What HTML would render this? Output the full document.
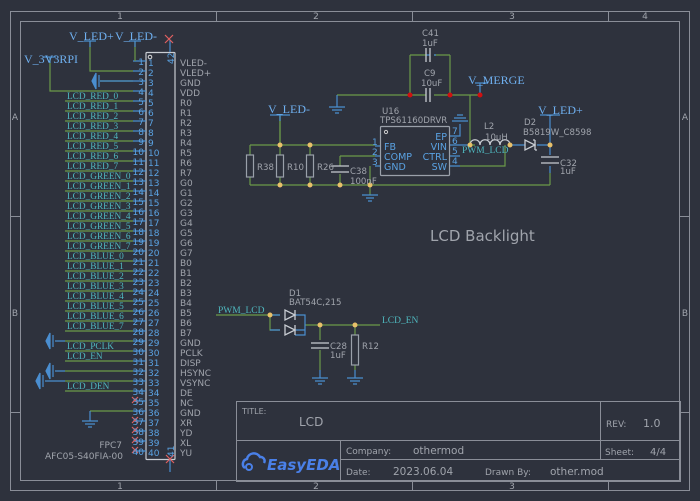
<!DOCTYPE html>
<html><head><meta charset="utf-8"><style>
html,body{margin:0;padding:0;background:#2e323d;}
svg{display:block}
.g{fill:#a0a4ac;font-family:"DejaVu Sans","Liberation Sans",sans-serif}
.b{fill:#5aa2e2;font-family:"DejaVu Sans","Liberation Sans",sans-serif}
.n{fill:#4fb8bf;font-family:"Liberation Serif",serif}
.p{fill:#6fb0f0;font-family:"Liberation Serif",serif}
</style></head><body>
<svg width="700" height="501" viewBox="0 0 700 501" xmlns="http://www.w3.org/2000/svg">
<rect width="700" height="501" fill="#2e323d"/>
<g stroke="#8a8e98" fill="none" stroke-width="1">
<rect x="10.5" y="11.5" width="679" height="479"/>
<rect x="20.5" y="21.5" width="659" height="459"/>
<path d="M216.5 11v10M412.5 11v10M608.5 11v10M216.5 481v10M412.5 481v10M608.5 481v10M10 216.5h10M10 412.5h10M680 216.5h10M680 412.5h10"/>
<rect x="236.5" y="401.5" width="444" height="80"/>
<path d="M236 440.5h444M340 459.5h340M340.5 440v41M600.5 401v58"/>
</g>
<g class="g" font-size="9" text-anchor="middle">
<text x="120" y="19">1</text><text x="316" y="19">2</text><text x="512" y="19">3</text><text x="645" y="19">4</text>
<text x="120" y="489">1</text><text x="316" y="489">2</text><text x="512" y="489">3</text>
<text x="15" y="120">A</text><text x="15" y="316">B</text><text x="685" y="120">A</text><text x="685" y="316">B</text>
</g>
<g class="g">
<text x="242" y="414" font-size="8">TITLE:</text>
<text x="299" y="426" font-size="12">LCD</text>
<text x="606" y="427" font-size="9">REV:</text><text x="643" y="427" font-size="11">1.0</text>
<text x="346" y="454" font-size="9">Company:</text><text x="413" y="454" font-size="10.5">othermod</text>
<text x="605" y="455" font-size="9">Sheet:</text><text x="650" y="455" font-size="10">4/4</text>
<text x="346" y="475" font-size="9">Date:</text><text x="393" y="475" font-size="10.5">2023.06.04</text>
<text x="485" y="475" font-size="9">Drawn By:</text><text x="550" y="475" font-size="10.5">other.mod</text>
<text x="430" y="241" font-size="15">LCD Backlight</text>
</g>
<g>
<path d="M245 468a5 5 0 0 1 2-9a7 7 0 0 1 13-2a4 4 0 0 1 4 6" stroke="#4a80e8" stroke-width="2.5" fill="none"/>
<circle cx="249" cy="467" r="3" stroke="#4a80e8" stroke-width="2" fill="none"/>
<text x="267" y="470" font-family="DejaVu Sans,sans-serif" font-style="italic" font-weight="bold" font-size="15" fill="#4a80e8">EasyEDA</text>
</g>

<!-- connector -->
<rect x="146" y="52.5" width="29" height="407" fill="none" stroke="#c8ccd2" stroke-width="1.2" rx="1"/>
<circle cx="150" cy="57" r="1.8" fill="none" stroke="#ddd"/>
<g id="pins" stroke="#4a8ed0" stroke-width="1.2">
<path d="M133 61h13M133 71h13M133 81h13M133 91h13M133 101h13M133 111h13M133 121h13M133 131h13M133 141h13M133 151h13M133 161h13M133 171h13M133 181h13M133 191h13M133 201h13M133 211h13M133 221h13M133 231h13M133 241h13M133 251h13M133 261h13M133 271h13M133 281h13M133 291h13M133 301h13M133 311h13M133 321h13M133 331h13M133 341h13M133 351h13M133 361h13M133 371h13M133 381h13M133 391h13M133 401h13M133 411h13M133 421h13M133 431h13M133 441h13M133 451h13"/>
<path d="M170 40v12M170 460v12"/>
</g>
<g stroke="#6b9a49" stroke-width="1.2" fill="none">
<path d="M65 101h68M65 111h68M65 121h68M65 131h68M65 141h68M65 151h68M65 161h68M65 171h68M65 181h68M65 191h68M65 201h68M65 211h68M65 221h68M65 231h68M65 241h68M65 251h68M65 261h68M65 271h68M65 281h68M65 291h68M65 301h68M65 311h68M65 321h68M65 331h68"/>
<path d="M65 341h68M65 351h68M65 361h68M65 371h68M65 381h68M65 391h68M90 411h43"/>
<path d="M90 41v30h43M135 41v20M50 57v34h83M100 81h33"/>
</g>
<g stroke="#4a8ed0" stroke-width="1.2" fill="#4a8ed0">
<path d="M55 341h10M55 371h10M45 381h20M100 81h33" fill="none"/>
<path d="M50 333l-4 8 4 8zM50 363l-4 8 4 8zM40 373l-4 8 4 8zM96 73l-4 8 4 8z"/>
<path d="M53 335v12M53 365v12M43 375v12M99 75v12" fill="none"/>
<path d="M90 411v10M82 421h16M85 424h10M88 427h4" fill="none"/>
<path d="M84 41h12M129 41h12M44 57h12M90 41v6M135 41v6M50 57v6" fill="none"/>
</g>
<g stroke="#e06060" stroke-width="1.2">
<path d="M165 35l8 8M173 35l-8 8M166 455l8 8M174 455l-8 8"/>
<path d="M132 397l6 6M138 397l-6 6M132 417l6 6M138 417l-6 6M132 427l6 6M138 427l-6 6M132 437l6 6M138 437l-6 6M132 447l6 6M138 447l-6 6"/>
</g>
<g class="p" font-size="12">
<text x="69" y="40">V_LED+</text><text x="115" y="40">V_LED-</text><text x="24" y="63">V_3V3RPI</text>
</g>
<g class="n" font-size="9.3">
<text x="67" y="99">LCD_RED_0</text><text x="67" y="109">LCD_RED_1</text><text x="67" y="119">LCD_RED_2</text><text x="67" y="129">LCD_RED_3</text><text x="67" y="139">LCD_RED_4</text><text x="67" y="149">LCD_RED_5</text><text x="67" y="159">LCD_RED_6</text><text x="67" y="169">LCD_RED_7</text>
<text x="67" y="179">LCD_GREEN_0</text><text x="67" y="189">LCD_GREEN_1</text><text x="67" y="199">LCD_GREEN_2</text><text x="67" y="209">LCD_GREEN_3</text><text x="67" y="219">LCD_GREEN_4</text><text x="67" y="229">LCD_GREEN_5</text><text x="67" y="239">LCD_GREEN_6</text><text x="67" y="249">LCD_GREEN_7</text>
<text x="67" y="259">LCD_BLUE_0</text><text x="67" y="269">LCD_BLUE_1</text><text x="67" y="279">LCD_BLUE_2</text><text x="67" y="289">LCD_BLUE_3</text><text x="67" y="299">LCD_BLUE_4</text><text x="67" y="309">LCD_BLUE_5</text><text x="67" y="319">LCD_BLUE_6</text><text x="67" y="329">LCD_BLUE_7</text>
<text x="67" y="349">LCD_PCLK</text><text x="67" y="359">LCD_EN</text><text x="67" y="389">LCD_DEN</text>
</g>
<g class="b" font-size="9" text-anchor="end">
<text x="144" y="65">1</text><text x="144" y="75">2</text><text x="144" y="85">3</text><text x="144" y="95">4</text><text x="144" y="105">5</text><text x="144" y="115">6</text><text x="144" y="125">7</text><text x="144" y="135">8</text><text x="144" y="145">9</text><text x="144" y="155">10</text><text x="144" y="165">11</text><text x="144" y="175">12</text><text x="144" y="185">13</text><text x="144" y="195">14</text><text x="144" y="205">15</text><text x="144" y="215">16</text><text x="144" y="225">17</text><text x="144" y="235">18</text><text x="144" y="245">19</text><text x="144" y="255">20</text><text x="144" y="265">21</text><text x="144" y="275">22</text><text x="144" y="285">23</text><text x="144" y="295">24</text><text x="144" y="305">25</text><text x="144" y="315">26</text><text x="144" y="325">27</text><text x="144" y="335">28</text><text x="144" y="345">29</text><text x="144" y="355">30</text><text x="144" y="365">31</text><text x="144" y="375">32</text><text x="144" y="385">33</text><text x="144" y="395">34</text><text x="144" y="405">35</text><text x="144" y="415">36</text><text x="144" y="425">37</text><text x="144" y="435">38</text><text x="144" y="445">39</text><text x="144" y="455">40</text>
</g>
<g class="b" font-size="9">
<text x="148" y="66">1</text><text x="148" y="76">2</text><text x="148" y="86">3</text><text x="148" y="96">4</text><text x="148" y="106">5</text><text x="148" y="116">6</text><text x="148" y="126">7</text><text x="148" y="136">8</text><text x="148" y="146">9</text><text x="148" y="156">10</text><text x="148" y="166">11</text><text x="148" y="176">12</text><text x="148" y="186">13</text><text x="148" y="196">14</text><text x="148" y="206">15</text><text x="148" y="216">16</text><text x="148" y="226">17</text><text x="148" y="236">18</text><text x="148" y="246">19</text><text x="148" y="256">20</text><text x="148" y="266">21</text><text x="148" y="276">22</text><text x="148" y="286">23</text><text x="148" y="296">24</text><text x="148" y="306">25</text><text x="148" y="316">26</text><text x="148" y="326">27</text><text x="148" y="336">28</text><text x="148" y="346">29</text><text x="148" y="356">30</text><text x="148" y="366">31</text><text x="148" y="376">32</text><text x="148" y="386">33</text><text x="148" y="396">34</text><text x="148" y="406">35</text><text x="148" y="416">36</text><text x="148" y="426">37</text><text x="148" y="436">38</text><text x="148" y="446">39</text><text x="148" y="456">40</text>
<text x="0" y="0" transform="translate(174 64) rotate(-90)">42</text>
<text x="0" y="0" transform="translate(174 457) rotate(-90)">41</text>
</g>
<g class="g" font-size="9">
<text x="180" y="66">VLED-</text><text x="180" y="76">VLED+</text><text x="180" y="86">GND</text><text x="180" y="96">VDD</text><text x="180" y="106">R0</text><text x="180" y="116">R1</text><text x="180" y="126">R2</text><text x="180" y="136">R3</text><text x="180" y="146">R4</text><text x="180" y="156">R5</text><text x="180" y="166">R6</text><text x="180" y="176">R7</text><text x="180" y="186">G0</text><text x="180" y="196">G1</text><text x="180" y="206">G2</text><text x="180" y="216">G3</text><text x="180" y="226">G4</text><text x="180" y="236">G5</text><text x="180" y="246">G6</text><text x="180" y="256">G7</text><text x="180" y="266">B0</text><text x="180" y="276">B1</text><text x="180" y="286">B2</text><text x="180" y="296">B3</text><text x="180" y="306">B4</text><text x="180" y="316">B5</text><text x="180" y="326">B6</text><text x="180" y="336">B7</text><text x="180" y="346">GND</text><text x="180" y="356">PCLK</text><text x="180" y="366">DISP</text><text x="180" y="376">HSYNC</text><text x="180" y="386">VSYNC</text><text x="180" y="396">DE</text><text x="180" y="406">NC</text><text x="180" y="416">GND</text><text x="180" y="426">XR</text><text x="180" y="436">YD</text><text x="180" y="446">XL</text><text x="180" y="456">YU</text>
<text x="122" y="448" text-anchor="end">FPC7</text><text x="123" y="459" text-anchor="end">AFC05-S40FIA-00</text>
</g>

<!-- backlight circuit -->
<g stroke="#6b9a49" stroke-width="1.2" fill="none">
<path d="M410 55v40M450 55v40M410 55h16M434 55h16M337 95h89M434 95h46M470 95v50h5"/>
<path d="M250 145h125M280 115v30M250 145v10M280 145v10M310 145v10M250 177v8M280 177v8M310 177v8M250 185h300M340 156h35M340 156v10M340 174v11M370 166v29M550 173v12"/>
<path d="M505 145v21H460M280 115v30"/>
<path d="M216 315h54v15h10M270 315h10M305 325h75M320 325v15M320 350v20M355 325v10M355 365v5"/>
</g>
<g stroke="#4a8ed0" stroke-width="1.2" fill="none">
<path d="M426 55h4M434 55h2M337 95v12M329 107h16M332 110h10M335 113h4"/>
<path d="M270 115h20M280 115v6M475 83h12M480 83v12M540 115h20M550 115v30M550 145v10M550 166v7M510 145h15M537 145h13"/>
<path d="M370 195h-8m8 0h8M363 195h14M366 198h8M368 201h4"/>
<path d="M450 136h10v-12M452 121h16M454 118h12M457 115h6M450 145h20M450 156h10M450 166h10M375 146h5M375 156h5M375 166h5"/>
<path d="M320 370v8M312 378h16M315 381h10M318 384h4M355 370v8M347 378h16M350 381h10M353 384h4M270 315h10M270 330h10M295 315h10v20h-10M295 330h10"/>
</g>
<g stroke="#c8ccd2" stroke-width="1.3" fill="none">
<path d="M426 48v14M430 48v14M426 88v14M430 88v14"/>
<path d="M331 166h18M331 172h18M541 157h18M541 163h18M311 343h18M311 348h18"/>
<path d="M470 145c0-7 10-7 10 0c0-7 10-7 10 0c0-7 10-7 10 0c0-7 10-7 10 0"/>
<path d="M525 140v10l10-5zM535 140v10M533 140l2 0M535 150l2 0"/>
<path d="M285 310v10l10-5zM295 310v10M285 325v10l10-5zM295 325v10"/>
</g>
<g stroke="#9aa0aa" stroke-width="1.2" fill="none">
<rect x="246.5" y="155" width="7" height="22"/><rect x="276.5" y="155" width="7" height="22"/><rect x="306.5" y="155" width="7" height="22"/><rect x="351.5" y="335" width="7" height="30"/>
<rect x="380.5" y="126.5" width="69" height="49" rx="1"/>
</g>
<circle cx="386" cy="132" r="1.6" fill="none" stroke="#ccc"/>
<g fill="#d01010"><circle cx="410" cy="95" r="2.5"/><circle cx="450" cy="95" r="2.5"/><circle cx="480" cy="95" r="2.5"/></g>
<g fill="#e8c06a"><circle cx="280" cy="145" r="2.5"/><circle cx="310" cy="145" r="2.5"/><circle cx="280" cy="185" r="2.5"/><circle cx="250" cy="185" r="2.5" fill="none"/><circle cx="310" cy="185" r="2.5"/><circle cx="340" cy="185" r="2.5"/><circle cx="370" cy="185" r="2.5"/><circle cx="470" cy="145" r="2.5"/><circle cx="510" cy="145" r="2.5"/><circle cx="550" cy="145" r="2.5"/><circle cx="270" cy="315" r="2.5"/><circle cx="320" cy="325" r="2.5"/><circle cx="355" cy="325" r="2.5"/></g>
<g class="p" font-size="12">
<text x="468" y="84">V_MERGE</text><text x="268" y="113">V_LED-</text><text x="538" y="114">V_LED+</text>
</g>
<g class="n" font-size="9.5">
<text x="462" y="153">PWM_LCD</text><text x="218" y="313">PWM_LCD</text><text x="382" y="323">LCD_EN</text>
</g>
<g class="g" font-size="8.6">
<text x="422" y="36">C41</text><text x="422" y="46">1uF</text>
<text x="424" y="76">C9</text><text x="421" y="86">10uF</text>
<text x="382" y="114">U16</text><text x="380" y="123">TPS61160DRVR</text>
<text x="484" y="129">L2</text><text x="485" y="140">10uH</text>
<text x="524" y="125">D2</text><text x="523" y="135">B5819W_C8598</text>
<text x="560" y="166">C32</text><text x="560" y="174">1uF</text>
<text x="257" y="170">R38</text><text x="287" y="170">R10</text><text x="317" y="170">R26</text>
<text x="350" y="174">C38</text><text x="350" y="184">100nF</text>
<text x="289" y="296">D1</text><text x="289" y="305">BAT54C,215</text>
<text x="330" y="349">C28</text><text x="330" y="358">1uF</text><text x="362" y="349">R12</text>
</g>
<g class="b" font-size="9.5">
<text x="384" y="150">FB</text><text x="384" y="160">COMP</text><text x="384" y="170">GND</text>
<text x="447" y="140" text-anchor="end">EP</text><text x="447" y="150" text-anchor="end">VIN</text><text x="447" y="160" text-anchor="end">CTRL</text><text x="447" y="170" text-anchor="end">SW</text>
<text x="372" y="145" font-size="9">1</text><text x="372" y="155" font-size="9">2</text><text x="372" y="165" font-size="9">3</text>
<text x="452" y="134" font-size="9">7</text><text x="452" y="144" font-size="9">6</text><text x="452" y="154" font-size="9">5</text><text x="452" y="164" font-size="9">4</text>
</g>
</svg>
</body></html>
